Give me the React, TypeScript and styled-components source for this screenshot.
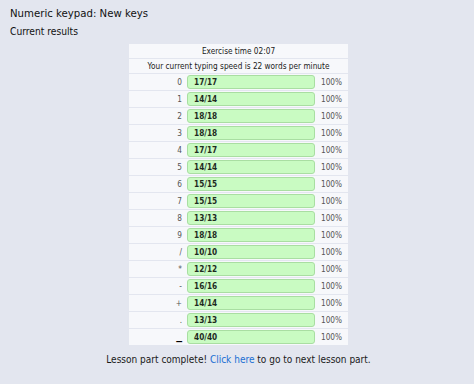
import React from "react";
import styled, { createGlobalStyle } from "styled-components";

const GlobalStyle = createGlobalStyle`
  html, body {
    margin: 0;
    padding: 0;
    background: #e3e6ef;
    font-family: "DejaVu Sans Condensed", "DejaVu Sans", sans-serif;
    color: #1a1a1a;
  }
`;

const Page = styled.div`
  padding: 6px 7px 0 10px;
  height: 384px;
  box-sizing: border-box;
`;

const Title = styled.div`
  font-size: 11.3px;
  line-height: 16px;
  margin-bottom: 2px;
  color: #111;
`;

const SubTitle = styled.div`
  font-size: 10.2px;
  line-height: 16px;
  margin-bottom: 3px;
  color: #111;
`;

const Table = styled.table`
  margin: 0 auto;
  width: 219px;
  border-collapse: separate;
  border-spacing: 0 1px;
  font-size: 8.2px;
  white-space: nowrap;
`;

const Row = styled.tr`
  background: #f7f8fb;
`;

const HeadCell = styled.td`
  text-align: center;
  padding: 0;
  height: 14px;
  line-height: 14px;
  color: #1a1a1a;
`;

const KeyCell = styled.td<{ $big?: boolean }>`
  width: 53px;
  text-align: right;
  padding: ${(p) => (p.$big ? "0 5px 5px 0" : "0 5px 0 0")};
  font-size: ${(p) => (p.$big ? "13px" : "8.2px")};
  font-weight: ${(p) => (p.$big ? 900 : 400)};
  color: ${(p) => (p.$big ? "#000" : "#555")};
  line-height: 10px;
`;

const BarCell = styled.td`
  width: 128px;
  padding: 1px 0;
`;

const Bar = styled.div`
  height: 14px;
  box-sizing: border-box;
  background: #c9fbc2;
  border: 1px solid #a9dea2;
  border-radius: 3px;
  font-weight: 700;
  font-size: 8.2px;
  line-height: 12px;
  padding-left: 6px;
  color: #1e2a1e;
`;

const PctCell = styled.td`
  padding: 0 0 0 6px;
  color: #555;
  line-height: 10px;
`;

const Footer = styled.div`
  text-align: center;
  font-size: 10px;
  margin-top: 8px;
`;

const Link = styled.a`
  color: #1b6fd3;
  text-decoration: none;
`;

const rows: [string, string][] = [
  ["0", "17/17"],
  ["1", "14/14"],
  ["2", "18/18"],
  ["3", "18/18"],
  ["4", "17/17"],
  ["5", "14/14"],
  ["6", "15/15"],
  ["7", "15/15"],
  ["8", "13/13"],
  ["9", "18/18"],
  ["/", "10/10"],
  ["*", "12/12"],
  ["-", "16/16"],
  ["+", "14/14"],
  [".", "13/13"],
  ["_", "40/40"],
];

export default function App() {
  return (
    <Page>
      <GlobalStyle />
      <Title>Numeric keypad: New keys</Title>
      <SubTitle>Current results</SubTitle>
      <Table>
        <tbody>
          <Row>
            <HeadCell colSpan={3}>Exercise time 02:07</HeadCell>
          </Row>
          <Row>
            <HeadCell colSpan={3}>
              Your current typing speed is 22 words per minute
            </HeadCell>
          </Row>
          {rows.map(([key, score]) => (
            <Row key={key}>
              <KeyCell $big={key === "_"}>{key}</KeyCell>
              <BarCell>
                <Bar>{score}</Bar>
              </BarCell>
              <PctCell>100%</PctCell>
            </Row>
          ))}
        </tbody>
      </Table>
      <Footer>
        Lesson part complete! <Link href="#">Click here</Link> to go to next
        lesson part.
      </Footer>
    </Page>
  );
}
